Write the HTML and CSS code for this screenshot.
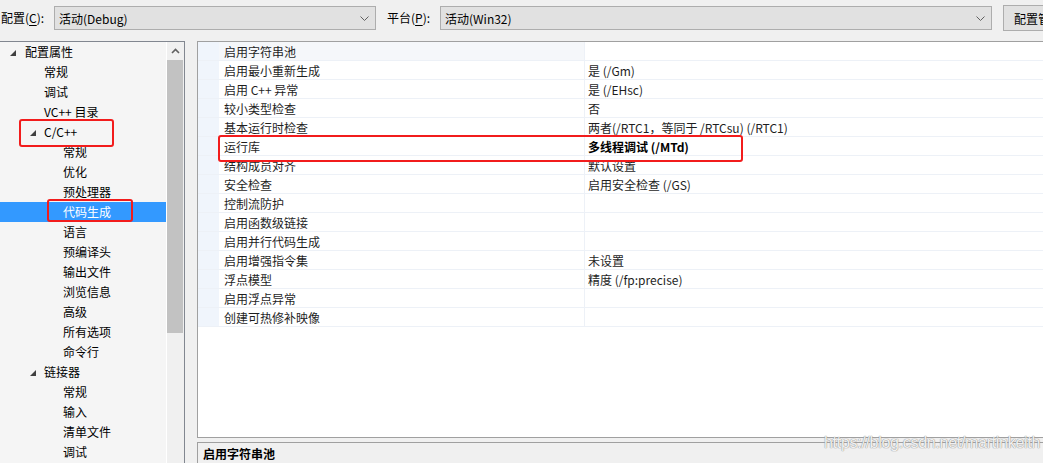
FILE: index.html
```html
<!DOCTYPE html>
<html lang="zh-CN">
<head>
    <meta charset="UTF-8">
    <title>属性页</title>
    <link rel="stylesheet" href="styles.css">
</head>
<body>
    <!-- Top bar: configuration / platform -->
    <div class="toolbar">
        <span class="label label-config">配置(<u>C</u>):</span>
        <div class="combo combo-config">
            <span>活动(Debug)</span>
            <svg class="chevron" width="9" height="5" viewBox="0 0 9 5"><path d="M0.5 0.5 L4.5 4.5 L8.5 0.5" fill="none" stroke="#606060" stroke-width="1"/></svg>
        </div>
        <span class="label label-platform">平台(<u>P</u>):</span>
        <div class="combo combo-platform">
            <span>活动(Win32)</span>
            <svg class="chevron" width="9" height="5" viewBox="0 0 9 5"><path d="M0.5 0.5 L4.5 4.5 L8.5 0.5" fill="none" stroke="#606060" stroke-width="1"/></svg>
        </div>
        <button class="btn">配置管理器(<u>O</u>)...</button>
    </div>

    <div class="main">
        <!-- Left: property tree -->
        <div class="tree">
            <ul class="tree-list">
                <li class="lvl0"><i class="tri"></i>配置属性</li>
                <li class="lvl1">常规</li>
                <li class="lvl1">调试</li>
                <li class="lvl1">VC++ 目录</li>
                <li class="lvl1 node"><i class="tri"></i>C/C++</li>
                <li class="lvl2">常规</li>
                <li class="lvl2">优化</li>
                <li class="lvl2">预处理器</li>
                <li class="lvl2 selected">代码生成</li>
                <li class="lvl2">语言</li>
                <li class="lvl2">预编译头</li>
                <li class="lvl2">输出文件</li>
                <li class="lvl2">浏览信息</li>
                <li class="lvl2">高级</li>
                <li class="lvl2">所有选项</li>
                <li class="lvl2">命令行</li>
                <li class="lvl1 node"><i class="tri"></i>链接器</li>
                <li class="lvl2">常规</li>
                <li class="lvl2">输入</li>
                <li class="lvl2">清单文件</li>
                <li class="lvl2">调试</li>
            </ul>
            <div class="scrollbar">
                <div class="scroll-up">
                    <svg width="9" height="6" viewBox="0 0 9 6"><path d="M1 5 L4.5 1.5 L8 5" fill="none" stroke="#606060" stroke-width="1.6"/></svg>
                </div>
                <div class="thumb"></div>
            </div>
            <div class="mark mark-cpp"></div>
            <div class="mark mark-codegen"></div>
        </div>

        <!-- Right: property grid + description -->
        <div class="right">
            <div class="grid">
                <table class="props">
                    <tr class="current"><td class="gutter"></td><td class="name">启用字符串池</td><td class="value"></td></tr>
                    <tr><td class="gutter"></td><td class="name">启用最小重新生成</td><td class="value">是 (/Gm)</td></tr>
                    <tr><td class="gutter"></td><td class="name">启用 C++ 异常</td><td class="value">是 (/EHsc)</td></tr>
                    <tr><td class="gutter"></td><td class="name">较小类型检查</td><td class="value">否</td></tr>
                    <tr><td class="gutter"></td><td class="name">基本运行时检查</td><td class="value">两者(/RTC1，等同于 /RTCsu) (/RTC1)</td></tr>
                    <tr><td class="gutter"></td><td class="name">运行库</td><td class="value bold">多线程调试 (/MTd)</td></tr>
                    <tr><td class="gutter"></td><td class="name">结构成员对齐</td><td class="value">默认设置</td></tr>
                    <tr><td class="gutter"></td><td class="name">安全检查</td><td class="value">启用安全检查 (/GS)</td></tr>
                    <tr><td class="gutter"></td><td class="name">控制流防护</td><td class="value"></td></tr>
                    <tr><td class="gutter"></td><td class="name">启用函数级链接</td><td class="value"></td></tr>
                    <tr><td class="gutter"></td><td class="name">启用并行代码生成</td><td class="value"></td></tr>
                    <tr><td class="gutter"></td><td class="name">启用增强指令集</td><td class="value">未设置</td></tr>
                    <tr><td class="gutter"></td><td class="name">浮点模型</td><td class="value">精度 (/fp:precise)</td></tr>
                    <tr><td class="gutter"></td><td class="name">启用浮点异常</td><td class="value"></td></tr>
                    <tr><td class="gutter"></td><td class="name">创建可热修补映像</td><td class="value"></td></tr>
                </table>
                <div class="mark mark-runtime"></div>
            </div>
            <div class="desc">启用字符串池</div>
            <div class="watermark">https://blog.csdn.net/martinkeith</div>
        </div>
    </div>
</body>
</html>
```

FILE: styles.css
```css
body {
    margin: 0;
    width: 1043px;
    height: 463px;
    overflow: hidden;
    background: #f0f0f0;
    font-family: "Microsoft YaHei UI", "Noto Sans CJK SC", "Noto Sans", sans-serif;
    font-size: 12px;
    color: #000;
}

/* Top bar */
.toolbar {
    display: flex;
    align-items: center;
    height: 41px;
    box-sizing: border-box;
    padding-bottom: 5px;
    white-space: nowrap;
    overflow: hidden;
}

.toolbar > * {
    flex-shrink: 0;
}

.label {
    line-height: 16px;
}

.label u {
    text-decoration-thickness: 1px;
    text-underline-offset: 2px;
}

.label-config {
    width: 53px;
    padding-left: 1px;
}

.label-platform {
    width: 53px;
    margin-left: 11px;
}

.combo {
    display: flex;
    align-items: center;
    justify-content: space-between;
    height: 24px;
    box-sizing: border-box;
    border: 1px solid #adadad;
    background: #e1e1e1;
    padding: 0 6px 0 4px;
}

.combo-config {
    width: 322px;
}

.combo-platform {
    width: 552px;
}

.chevron {
    display: block;
}

.btn {
    margin-left: 11px;
    height: 26px;
    padding: 0 10px;
    border: 1px solid #adadad;
    background: #e1e1e1;
    font-family: inherit;
    font-size: 12px;
    color: #000;
}

/* Main area */
.main {
    display: flex;
    align-items: stretch;
    height: 422px;
}

/* Tree */
.tree {
    position: relative;
    display: flex;
    width: 185px;
    flex-shrink: 0;
    box-sizing: border-box;
    border-top: 1px solid #828790;
    border-right: 1px solid #828790;
    background: #f5f5f5;
}

.tree-list {
    list-style: none;
    margin: 0;
    padding: 0;
    width: 166px;
    border-right: 1px solid #ffffff;
}

.tree-list li {
    position: relative;
    height: 20px;
    line-height: 20px;
    white-space: nowrap;
}

.lvl0 { padding-left: 25px; }
.lvl1 { padding-left: 44px; }
.lvl2 { padding-left: 63px; }

.tree-list li.selected {
    background: #3399ff;
    color: #fff;
}

.tri {
    position: absolute;
    top: 8px;
    width: 0;
    height: 0;
    border-left: 6px solid transparent;
    border-bottom: 6px solid #404040;
}

.lvl0 .tri { left: 10px; }
.lvl1 .tri { left: 30px; }

.scrollbar {
    width: 17px;
    background: #f0f0f0;
}

.scroll-up {
    height: 18px;
    display: flex;
    align-items: center;
    justify-content: center;
}

.thumb {
    margin: 0 1px 0 0;
    height: 273px;
    background: #c2c2c2;
}

/* Red annotation boxes (overlays) */
.mark {
    position: absolute;
    border: 2px solid #f21c1c;
    border-radius: 3px;
    box-sizing: border-box;
    pointer-events: none;
}

.mark-cpp {
    left: 19px;
    top: 77px;
    width: 95px;
    height: 28px;
}

.mark-codegen {
    left: 47px;
    top: 157px;
    width: 86px;
    height: 23px;
}

.mark-runtime {
    left: 20px;
    top: 93px;
    width: 525px;
    height: 27px;
}

/* Right column */
.right {
    position: relative;
    flex: 1;
    margin-left: 12px;
    display: flex;
    flex-direction: column;
}

.grid {
    position: relative;
    height: 398px;
    box-sizing: border-box;
    border: 1px solid #a0a0a0;
    border-right: none;
    background: #fff;
}

.props {
    border-collapse: collapse;
    width: 100%;
    table-layout: fixed;
}

.props td {
    height: 17px;
    padding: 1px 0 0 0;
    border-bottom: 1px solid #edf1f7;
    line-height: 17px;
    white-space: nowrap;
    overflow: hidden;
    color: #1e1e1e;
}

.props td.gutter {
    width: 21px;
    background: #f0f5fc;
}

.props td.name {
    width: 360px;
    padding-left: 5px;
    border-right: 1px solid #edf1f7;
}

.props td.value {
    padding-left: 3px;
}

.props tr.current td.name {
    background: #f5f7fa;
}

.props td.bold {
    font-weight: bold;
    color: #000;
}

.desc {
    margin-top: 4px;
    flex: 1;
    border: 1px solid #a0a0a0;
    border-right: none;
    border-bottom: none;
    padding: 2px 0 0 5px;
    font-weight: bold;
    line-height: 18px;
}

.watermark {
    position: absolute;
    right: 3px;
    bottom: 11px;
    font-family: "Liberation Sans", Arial, sans-serif;
    font-size: 16px;
    letter-spacing: -0.3px;
    color: rgba(255, 255, 255, 0.9);
    text-shadow: 0 0 1px #8c8c8c, 0 0 1px #8c8c8c;
    pointer-events: none;
}
```
